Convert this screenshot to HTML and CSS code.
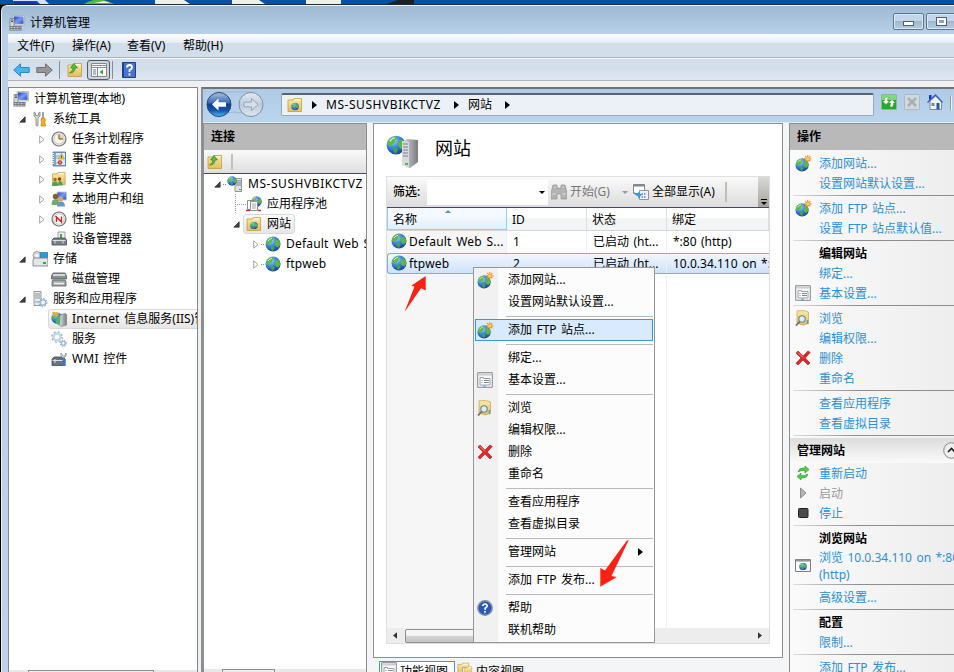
FILE: index.html
```html
<!DOCTYPE html>
<html lang="zh-CN">
<head>
    <meta charset="UTF-8">
    <title>计算机管理</title>
    <link rel="stylesheet" href="styles.css">
</head>
<body>
<svg class="defs" width="0" height="0">
    <defs>
        <radialGradient id="gSea" cx="35%" cy="28%" r="75%"><stop offset="0" stop-color="#b9dcff"/><stop offset=".4" stop-color="#4a92ea"/><stop offset=".75" stop-color="#2360cc"/><stop offset="1" stop-color="#1c4593"/></radialGradient>
        <linearGradient id="gFolder" x1="0" y1="0" x2="0" y2="1"><stop offset="0" stop-color="#fbe9a9"/><stop offset="1" stop-color="#e5bc5d"/></linearGradient>
        <linearGradient id="gMetal" x1="0" y1="0" x2="1" y2="0"><stop offset="0" stop-color="#dcdfe2"/><stop offset="1" stop-color="#777c80"/></linearGradient>
        <linearGradient id="gBack" x1="0" y1="0" x2="0" y2="1"><stop offset="0" stop-color="#a9c0e0"/><stop offset=".42" stop-color="#3f6db3"/><stop offset=".5" stop-color="#0d3f93"/><stop offset=".75" stop-color="#1458ae"/><stop offset="1" stop-color="#45c0fa"/></linearGradient>
        <linearGradient id="gFwd" x1="0" y1="0" x2="0" y2="1"><stop offset="0" stop-color="#e4ebf3"/><stop offset=".5" stop-color="#bccbdc"/><stop offset="1" stop-color="#dbe7f2"/></linearGradient>
        <linearGradient id="gScreen" x1="0" y1="0" x2="1" y2="1"><stop offset="0" stop-color="#1836c4"/><stop offset=".5" stop-color="#7b9df3"/><stop offset="1" stop-color="#2448c8"/></linearGradient>
    </defs>
    <symbol id="globe" viewBox="0 0 16 16">
        <circle cx="8" cy="8" r="7.500" fill="url(#gSea)"/>
        <path d="M1.500 5.500 4 2.200 7.500 1 8.700 2.700 7 4.500 7.300 6 5 7.500 4.500 9 2.500 8.500 1 8z" fill="#5dba45"/>
        <path d="M10.500 4 13 3.500 15 6.500 15.200 9 13 11.500 11 10.500 9.500 8z" fill="#5cb544"/>
        <path d="M5.500 10 8.500 10.200 9.500 12 7.800 15 6.200 13.500z" fill="#49a53a"/>
        <path d="M3 5 5 3 7 2.300" stroke="#d5f3c2" fill="none"/>
    </symbol>
    <symbol id="globe-new" viewBox="0 0 18 18">
        <use href="#globe" x="0" y="3" width="15" height="15"/>
        <path d="M13.500 0v8M9.500 4h8M10.700 1.200l5.600 5.600M16.300 1.200l-5.600 5.600" stroke="#f0952a" stroke-width="1.300"/>
        <circle cx="13.500" cy="4" r="1.700" fill="#ffd36a"/>
    </symbol>
    <symbol id="pc" viewBox="0 0 16 16">
        <path d="M4 .5h11.500v9.500H4z" fill="#dfe1e3" stroke="#a9a9a0" stroke-width=".7"/>
        <path d="M5 1.500h9.500v7.300H5z" fill="url(#gScreen)"/>
        <path d="M1 3.500h4v8H1z" fill="#d5d7d8" stroke="#6d7276" stroke-width=".7"/>
        <path d="M2 5h2M2 6.500h2" stroke="#555"/>
        <path d="M.5 11h12v4.500H.5z" fill="#6b7278"/>
        <path d="M1.500 12.300h10M1.500 14.300h10" stroke="#d8dbdd" stroke-dasharray="2 1"/>
    </symbol>
    <symbol id="tools" viewBox="0 0 16 16">
        <path d="M2 1v4l2 2v7.500q1 1 2 0V7l2-2V1L6.500 2v2.500h-3V2z" fill="#d9dbdd" stroke="#7c8084" stroke-width=".8"/>
        <path d="M11 1v6" stroke="#82878b" stroke-width="1.500"/>
        <path d="M9.800 7h2.700l1 2-.8 2 .8 4H9l.8-4-.8-2z" fill="#f4b31c" stroke="#b97a07" stroke-width=".7"/>
    </symbol>
    <symbol id="clock" viewBox="0 0 16 16">
        <circle cx="8" cy="8" r="7" fill="#ececec" stroke="#757575" stroke-width="1.200"/>
        <circle cx="8" cy="8" r="5" fill="#fdf5dd" stroke="#bbb" stroke-width=".7"/>
        <path d="M8 8V3.500A4.500 4.500 0 0 1 12.500 8z" fill="#f0d08e"/>
        <path d="M8 3.500V8h4" stroke="#555" fill="none"/>
    </symbol>
    <symbol id="book" viewBox="0 0 16 16">
        <path d="M2 1h12.500v14H2z" fill="#7ba9d2" stroke="#46719a" stroke-width=".8"/>
        <path d="M5 2h9v12H5z" fill="#dce8f2"/>
        <path d="M5 5h4M5 7h3M5 12h2" stroke="#7d9cb8" stroke-width=".8"/>
        <path d="M10.500 2.500l3 5.500h-6z" fill="#f7cf2a" stroke="#a8820a" stroke-width=".5"/>
        <path d="M10.500 4.500v2.500" stroke="#333" stroke-width=".8"/>
        <circle cx="9" cy="11.500" r="2.300" fill="#cf2f2c"/><path d="M8 10.500l2 2M10 10.500l-2 2" stroke="#fff" stroke-width=".6"/>
        <path d="M2 2v12" stroke="#f3f3f3" stroke-width="2" stroke-dasharray="1 1"/>
    </symbol>
    <symbol id="folder" viewBox="0 0 16 16">
        <path d="M1 3h5l1-1.500h7.500V14.500H1z" fill="url(#gFolder)" stroke="#c39b45" stroke-width=".8"/>
        <path d="M8 2.800h5.500" stroke="#fff"/>
    </symbol>
    <symbol id="share" viewBox="0 0 16 16">
        <use href="#folder" width="16" height="15"/>
        <circle cx="4" cy="8.500" r="1.700" fill="#a9662c"/><circle cx="8.500" cy="8" r="1.700" fill="#80451d"/>
        <path d="M1 15q0-4.500 3-4.500T7 15zM7 14.500q0-4.500 2-4.500t3 4.500z" fill="#4da15a"/>
    </symbol>
    <symbol id="users" viewBox="0 0 16 16">
        <path d="M6 1h9.500v8H6z" fill="url(#gScreen)" stroke="#c9c9bd"/>
        <circle cx="4.500" cy="5.500" r="2.700" fill="#8a5b2b"/><circle cx="9.500" cy="8" r="2.500" fill="#d7a468"/>
        <path d="M.5 14q0-6 4-6t4 6z" fill="#6fae6a"/><path d="M6 15.500q0-5 4-5t4 5z" fill="#6b95c9"/>
    </symbol>
    <symbol id="perf" viewBox="0 0 16 16">
        <circle cx="8" cy="8" r="7" fill="#f3f3f3" stroke="#707070" stroke-width="1.200"/>
        <circle cx="8" cy="8" r="5.200" fill="#fff" stroke="#aaa" stroke-width=".6"/>
        <path d="M5.500 11V6M4.500 5l6 6V5.500" stroke="#d8201d" stroke-width="1.400" fill="none"/>
    </symbol>
    <symbol id="device" viewBox="0 0 16 16">
        <path d="M7 1h7v7H7z" fill="#eef0f1" stroke="#888" stroke-width=".8"/><path d="M10 3v4" stroke="#47a447" stroke-width="2"/>
        <path d="M1 9l2-2h11l1.500 2v5H1z" fill="#75818c" stroke="#454d55" stroke-width=".8"/>
        <path d="M1.500 9.500h13M4 9.500v3M12 9.500v3" stroke="#dde1e4"/>
    </symbol>
    <symbol id="storage" viewBox="0 0 16 16">
        <circle cx="5" cy="4.500" r="4" fill="#d9dee2" stroke="#868c91" stroke-width=".8"/><circle cx="5" cy="4.500" r="1.200" fill="#fff"/>
        <path d="M8 1.500h8v5H8z" fill="#2c9bd8" stroke="#256c98" stroke-width=".6"/>
        <path d="M1 9l1-2h13l1 2v6H1z" fill="#e3e5e6" stroke="#73787c" stroke-width=".8"/>
        <path d="M11 12h3" stroke="#35ad35" stroke-width="2"/>
    </symbol>
    <symbol id="disk" viewBox="0 0 16 16">
        <path d="M2 2h12l1.500 3v3H.5V5z" fill="#898e91" stroke="#505457" stroke-width=".8"/>
        <path d="M2 3h12v2H2z" fill="#d5d8da"/><path d="M11 6h3" stroke="#56c24a" stroke-width="1.500"/>
        <path d="M2 9h12l1 2v4H1v-4z" fill="#a6a9ab" stroke="#54585a" stroke-width=".8"/><path d="M3 12.500h10" stroke="#eee" stroke-width="1.500"/>
    </symbol>
    <symbol id="gear" viewBox="0 0 16 16">
        <circle cx="6" cy="6" r="3.500" fill="none" stroke="#c2d8ea" stroke-width="2.500"/>
        <circle cx="6" cy="6" r="5.200" fill="none" stroke="#9ab6cf" stroke-width="1.400" stroke-dasharray="2 2.100"/>
        <circle cx="12.300" cy="12.300" r="1.900" fill="none" stroke="#9dbad4" stroke-width="1.400"/>
        <circle cx="12.300" cy="12.300" r="3" fill="none" stroke="#7798b6" stroke-dasharray="1.200 1.200"/>
    </symbol>
    <symbol id="svcapp" viewBox="0 0 16 16">
        <path d="M2 .5h7v14H2z" fill="#e7eaec" stroke="#7b8083" stroke-width=".8"/>
        <path d="M3 3h5M3 5h5M3 7h5M3 11h4" stroke="#8e979d"/>
        <circle cx="11" cy="11.500" r="2.700" fill="#fff" stroke="#9dbad4" stroke-width="1.600"/>
        <circle cx="11" cy="11.500" r="4" fill="none" stroke="#7e9fbf" stroke-dasharray="1.500 1.600"/>
    </symbol>
    <symbol id="iis" viewBox="0 0 16 16">
        <use href="#globe" width="12" height="12" y="1"/>
        <path d="M1 .5l7 1.500-2 3-3 .5z" fill="#e9ae28"/>
        <path d="M9 4l5-1.500 1.500 1V14L10 15.500 8.500 14z" fill="url(#gMetal)" stroke="#71767a" stroke-width=".6"/>
        <path d="M5 12l1-7 2.500 2v8z" fill="#4bb862"/>
    </symbol>
    <symbol id="wmi" viewBox="0 0 16 16">
        <path d="M1 8l2-2h9l2 2v6.500H1z" fill="#69747e" stroke="#3f474e" stroke-width=".8"/><path d="M1.500 9.500h12M4 8v4" stroke="#dbe0e3"/>
        <path d="M10 2l2 3h2l1-3q1 3-2 5-4-1-3-5z" fill="#e8eaeb" stroke="#868b8f" stroke-width=".8"/>
        <path d="M13 8v7" stroke="#3777c4" stroke-width="3"/>
    </symbol>
    <symbol id="server" viewBox="0 0 16 16">
        <path d="M8 2.500h6.500v13H8z" fill="#dfe3e5" stroke="#787e82" stroke-width=".8"/><path d="M9 5h5M9 7h5M9 9h5" stroke="#788086"/><path d="M12 13.500h2" stroke="#3fae3f"/>
        <use href="#globe" width="10" height="10"/>
    </symbol>
    <symbol id="pool" viewBox="0 0 16 16">
        <use href="#globe" width="11" height="11" x="5"/>
        <path d="M1.500 4.500h7v9h-7z" fill="#fff" stroke="#8e8e8e"/><path d="M4.500 5.500h7v9h-7z" fill="#fff" stroke="#8e8e8e"/>
        <path d="M6 8h4M6 10h4M6 12h4" stroke="#9aa"/><path d="M0 14.500h4M12 14.500h3" stroke="#cc2e2e" stroke-width="1.500"/>
    </symbol>
    <symbol id="sites" viewBox="0 0 16 16">
        <use href="#folder" width="16" height="16"/><use href="#globe" x="4" y="5.500" width="8" height="8"/>
    </symbol>
    <symbol id="folder-up" viewBox="0 0 16 16">
        <use href="#folder" width="16" height="16"/>
        <path d="M2.500 11Q8 11 8 6h2.500L7 1.500 3.500 6H6q0 3-3.500 5z" fill="#52c43c" stroke="#2a8420" stroke-width=".7"/>
    </symbol>
    <symbol id="settings" viewBox="0 0 16 16">
        <path d="M.7.700h14.600v14.600H.7z" fill="#f7f9fa" stroke="#85898c"/><path d="M1 2.500h14" stroke="#c9cdd0" stroke-width="2"/>
        <path d="M3 5.500h3.500v1H13v6.500H3z" fill="#fff" stroke="#9aa0a4"/><path d="M4.500 8.500h1M7 8.500h5M4.500 10.500h1M7 10.500h5" stroke="#7e8c98"/>
        <path d="M6 14.200h3" stroke="#27b3e8"/>
    </symbol>
    <symbol id="browse" viewBox="0 0 16 16">
        <path d="M2 .7h7L13.500 2v11.500L8 15 2 13z" fill="url(#gFolder)" stroke="#c7a04c" stroke-width=".7"/><path d="M12.500 10v4" stroke="#55a0d8" stroke-width="1.500"/>
        <circle cx="7" cy="9" r="3.200" fill="#d8effb" stroke="#72818c" stroke-width="1.100"/><path d="M4.700 11.500L1 15.500" stroke="#676d72" stroke-width="1.800"/>
    </symbol>
    <symbol id="delete" viewBox="0 0 16 16">
        <path d="M1 3l2-2 5 5 5-5 2.200 1.500L10.200 8l4.800 5-2 2-5-5-5 5-2-1.800L6 8z" fill="#df2a2a" stroke="#a91414" stroke-width=".6"/>
        <path d="M3 2.500l5 5" stroke="#ff8c83"/>
    </symbol>
    <symbol id="help" viewBox="0 0 16 16">
        <circle cx="8" cy="8" r="7.200" fill="#2a57b8" stroke="#8690a0" stroke-width="1.500"/>
        <path d="M5.800 6Q6 4 8 4t2.200 1.900Q10 7.200 8.300 8L8 9.800M8 11v1.700" stroke="#fff" stroke-width="1.700" fill="none"/>
    </symbol>
    <symbol id="arrow-l" viewBox="0 0 17 14"><path d="M.7 7L7.500.8v3.700h8.700v5H7.500v3.700z"/></symbol>
    <symbol id="tri" viewBox="0 0 5 8"><path d="M0 0l5 4-5 4z"/></symbol>
    <symbol id="open" viewBox="0 0 7 7"><path d="M6.200.8v5.400H.8z" fill="#444" stroke="#111" stroke-width=".6"/></symbol>
    <symbol id="closed" viewBox="0 0 6 9"><path d="M.7.800L5 4.500.7 8.200z" fill="#fff" stroke="#a3a3a3"/></symbol>
</svg>

<div class="desktop">
    <svg width="954" height="4">
        <path d="M155 0h29l6 4h-35zM232 0h27l6 4h-33zM306 0h35v4h-35z" fill="#efefec"/><path d="M185 0h46v4h-40zM260 0h45v4h-39z" fill="#0b50a3"/>
        <path d="M13 0h32l4 4h-9l-3-3H13z" fill="#d5e1fa"/><path d="M14 2h20l3 2H14z" fill="#1a2fc0"/><path d="M84 4q14-9 30 0z" fill="#56b934"/><path d="M94 3l10-2 6 2z" fill="#e9f7e4"/>
        <path d="M387 4q18-8 27-4v4z" fill="#1c2025"/>
    </svg>
</div>
<div class="window">
    <div class="titlebar">
        <svg class="ico"><use href="#pc"/></svg>
        <span class="title">计算机管理</span>
        <div class="winbtn"><i class="min"></i></div>
        <div class="winbtn"><i class="max"></i></div>
    </div>
    <div class="menubar"><span>文件(F)</span><span>操作(A)</span><span>查看(V)</span><span>帮助(H)</span></div>
    <div class="toolbar">
        <svg width="17" height="14" fill="#45b4ee" stroke="#2e86c6"><use href="#arrow-l"/></svg>
        <svg class="flip" width="17" height="14" fill="#969696" stroke="#707070"><use href="#arrow-l"/></svg>
        <i class="tsep"></i>
        <svg class="ico up"><use href="#folder-up"/></svg>
        <div class="pressed"><svg width="16" height="14"><path d="M.5.5h15v13H.5z" fill="#f8f8f8" stroke="#888"/><path d="M1 2.500h14M1 4.500h14" stroke="#8b939a"/><path d="M2 7h3M2 9h3M2 11h3" stroke="#4f88b8"/><path d="M6.500 5v8" stroke="#888"/><path d="M12 6.500v5L8.500 9z" fill="#3caa2c"/></svg></div>
        <i class="tsep"></i>
        <svg class="qhelp" width="14" height="16"><path d="M.5.500h13v15H.5z" fill="#4a73cf" stroke="#1f3c8f"/><path d="M1.500 1v14" stroke="#1e429b"/><path d="M5 5.500Q5 3 7.500 3T10 5.500Q10 7 7.500 8v2M7.500 11.500v2" stroke="#fff" stroke-width="1.800" fill="none"/></svg>
    </div>
    <div class="content">
        <div class="tree console">
            <div class="row root"><span class="node"><svg class="ico"><use href="#pc"/></svg>计算机管理(本地)</span></div>
            <div class="row l1"><svg class="tw"><use href="#open" width="7" height="7" x="1" y="1"/></svg><span class="node"><svg class="ico"><use href="#tools"/></svg>系统工具</span></div>
            <div class="row l2"><svg class="tw"><use href="#closed" width="6" height="9" x="1"/></svg><span class="node"><svg class="ico"><use href="#clock"/></svg>任务计划程序</span></div>
            <div class="row l2"><svg class="tw"><use href="#closed" width="6" height="9" x="1"/></svg><span class="node"><svg class="ico"><use href="#book"/></svg>事件查看器</span></div>
            <div class="row l2"><svg class="tw"><use href="#closed" width="6" height="9" x="1"/></svg><span class="node"><svg class="ico"><use href="#share"/></svg>共享文件夹</span></div>
            <div class="row l2"><svg class="tw"><use href="#closed" width="6" height="9" x="1"/></svg><span class="node"><svg class="ico"><use href="#users"/></svg>本地用户和组</span></div>
            <div class="row l2"><svg class="tw"><use href="#closed" width="6" height="9" x="1"/></svg><span class="node"><svg class="ico"><use href="#perf"/></svg>性能</span></div>
            <div class="row l2"><svg class="tw"></svg><span class="node"><svg class="ico"><use href="#device"/></svg>设备管理器</span></div>
            <div class="row l1"><svg class="tw"><use href="#open" width="7" height="7" x="1" y="1"/></svg><span class="node"><svg class="ico"><use href="#storage"/></svg>存储</span></div>
            <div class="row l2"><svg class="tw"></svg><span class="node"><svg class="ico"><use href="#disk"/></svg>磁盘管理</span></div>
            <div class="row l1"><svg class="tw"><use href="#open" width="7" height="7" x="1" y="1"/></svg><span class="node"><svg class="ico"><use href="#svcapp"/></svg>服务和应用程序</span></div>
            <div class="row l2"><svg class="tw"></svg><span class="node selected wide"><svg class="ico"><use href="#iis"/></svg><span class="lat">Internet </span>信息服务(IIS)管</span></div>
            <div class="row l2"><svg class="tw"></svg><span class="node"><svg class="ico"><use href="#gear"/></svg>服务</span></div>
            <div class="row l2"><svg class="tw"></svg><span class="node"><svg class="ico"><use href="#wmi"/></svg><span class="lat">WMI </span>控件</span></div>
            <div class="hscroll"><i></i></div>
        </div>

        <div class="iis">
            <div class="navbar">
                <svg class="navbtns" width="66" height="32">
                    <path d="M12 3h38M12 28q19-10 38 0" stroke="#9fb7cf" fill="none"/>
                    <circle cx="16" cy="15.500" r="12" fill="url(#gBack)" stroke="#2b466f"/>
                    <path d="M9 15.500l6.500-6v3.700h7.500v4.600h-7.500v3.700z" fill="#fff"/>
                    <circle cx="48" cy="15.500" r="12" fill="url(#gFwd)" stroke="#7f90a3"/>
                    <path d="M55 15.500l-6.500-6v3.700H41v4.600h7.500v3.700z" fill="#d4dfea" stroke="#98a9ba"/>
                </svg>
                <div class="address">
                    <svg class="ico"><use href="#sites"/></svg>
                    <svg class="crumb"><use href="#tri"/></svg>
                    <span class="host">MS-SUSHVBIKCTVZ</span>
                    <svg class="crumb"><use href="#tri"/></svg>
                    <span class="site">网站</span>
                    <svg class="crumb"><use href="#tri"/></svg>
                </div>
                <svg class="ico n1" viewBox="0 0 16 16"><rect x=".5" y=".5" width="15" height="15" rx="1" fill="#25ac2d" stroke="#8fb890"/><path d="M1 1h14v5H1z" fill="#7fd77f"/><path d="M7 3H5.500q-2 0-2 3v1H1.500L5 10.500 8.500 7h-2V5.500H7zM9 13h1.500q2 0 2-3V9h2L11 5.500 7.500 9h2v1.500H9z" fill="#fff" stroke="#2d8a2f" stroke-width=".4"/></svg>
                <svg class="ico n2" viewBox="0 0 16 16"><rect x=".5" y=".5" width="15" height="15" rx="1" fill="#d3d8dd" stroke="#b1b8be"/><path d="M4 4l8 8M12 4l-8 8" stroke="#a9afb5" stroke-width="2.500"/></svg>
                <svg class="ico n3" viewBox="0 0 16 16"><path d="M3 7v8.500h11.500V7L8.500 2z" fill="#eff2f7" stroke="#7f8ca5"/><path d="M.5 8.500L8.500 1l7 7.500" stroke="#3b60bd" fill="none" stroke-width="1.500"/><path d="M2 1h2.500v3L2 6z" fill="#1336c8"/><path d="M9.500 9h3v6.500h-3z" fill="#2c559c"/><path d="M4.500 9h3v3h-3z" fill="#81868f"/></svg>
                <i class="navsep"></i>
            </div>
            <div class="panes">
                <div class="connections">
                    <div class="phead">连接</div>
                    <div class="ptool"><svg class="ico"><use href="#folder-up"/></svg><i></i></div>
                    <div class="tree">
                        <div class="row c0"><svg class="tw"><use href="#open" width="7" height="7" y="1"/><path d="M9 4.500h4" stroke="#888" stroke-dasharray="1 1"/></svg><span class="node"><svg class="ico"><use href="#server"/></svg><span class="host">MS-SUSHVBIKCTVZ</span></span></div>
                        <div class="row c1 line"><svg class="tw"></svg><span class="node"><svg class="ico"><use href="#pool"/></svg>应用程序池</span></div>
                        <div class="row c1"><svg class="tw"><use href="#open" width="7" height="7" y="1"/></svg><span class="node selected"><svg class="ico"><use href="#sites"/></svg>网站</span></div>
                        <div class="row c2"><svg class="tw"><use href="#closed" width="6" height="9" x="1"/><path d="M9 4.500h4" stroke="#888" stroke-dasharray="1 1"/></svg><span class="node"><svg class="ico"><use href="#globe"/></svg><span class="lat">Default Web S</span></span></div>
                        <div class="row c2"><svg class="tw"><use href="#closed" width="6" height="9" x="1"/><path d="M9 4.500h4" stroke="#888" stroke-dasharray="1 1"/></svg><span class="node"><svg class="ico"><use href="#globe"/></svg><span class="lat">ftpweb</span></span></div>
                    </div>
                    <div class="hscroll"><i></i></div>
                </div>

                <div class="middle">
                    <div class="feature">
                        <div class="fhead">
                            <svg width="34" height="34" viewBox="0 0 34 34"><use href="#globe" width="20" height="20"/><path d="M16 7l5-3 11 1v22l-8 6-8-3z" fill="url(#gMetal)"/><path d="M16 6l7 1v25l-7-2z" fill="#d7dadc"/><path d="M17 9h5M17 12h5M17 15h5M17 18h5M17 21h5" stroke="#7a8084"/><path d="M19 29h3" stroke="#36c236" stroke-width="2"/></svg>
                            <h1>网站</h1>
                        </div>
                        <div class="list">
                            <div class="filter">
                                <span class="flabel">筛选:</span>
                                <div class="combo"><i class="down"></i></div>
                                <svg class="ico bino" viewBox="0 0 16 16"><path d="M2 1h4v3h4V1h4l2 8v6h-6v-5H6v5H0V9z" fill="#b3b3b3" stroke="#929292" stroke-width=".7"/><path d="M1.500 10h3M11.500 10h3M3 3h2M11 3h2" stroke="#e4e4e4"/></svg>
                                <span class="go">开始(G)</span>
                                <i class="down gray"></i>
                                <svg class="ico all" viewBox="0 0 16 16"><path d="M.5.5h11v9H.5z" fill="#fff" stroke="#80878e"/><path d="M.5 1.500h11" stroke="#80878e" stroke-width="2"/><path d="M6.500 6.500h9v9h-9z" fill="#eef3fa" stroke="#8b939b"/><path d="M8.500 10h5M8.500 13h5" stroke="#5b7fc4" stroke-width="1.500" stroke-dasharray="1.500 1"/><path d="M1 8q1 4 4 4v2.500l4-3.800L5 8v2Q3 10 1 8z" fill="#2aa0e5"/></svg>
                                <span class="showall">全部显示(A)</span>
                                <i class="fsep"></i>
                                <div class="more"><i></i><b></b></div>
                            </div>
                            <div class="grid head"><span class="sorted">名称</span><span>ID</span><span>状态</span><span>绑定</span></div>
                            <div class="grid body">
                                <span class="name"><svg class="ico"><use href="#globe"/></svg><em class="lat">Default Web S...</em></span><span>1</span><span>已启动 (ht...</span><span>*:80 (http)</span>
                            </div>
                            <div class="grid body active">
                                <span class="name"><svg class="ico"><use href="#globe"/></svg><em class="lat">ftpweb</em></span><span>2</span><span>已启动 (ht...</span><span>10.0.34.110 on *:</span>
                            </div>
                            <div class="grid body fill"><span class="name"></span><span></span><span></span><span></span></div>
                            <div class="lscroll"><svg class="crumb flip"><use href="#tri"/></svg><i></i><svg class="crumb"><use href="#tri"/></svg></div>
                        </div>
                    </div>
                    <div class="tabs">
                        <span class="tab on"><svg class="ico"><use href="#settings"/></svg>功能视图</span>
                        <span class="tab"><svg class="ico" viewBox="0 0 16 16"><use href="#folder" width="13" height="13"/><path d="M5.500 5.500h8v10h-8z" fill="#fff" stroke="#9aa"/><use href="#folder" x="6" y="4" width="10" height="9"/></svg>内容视图</span>
                    </div>
                </div>

                <div class="actions">
                    <div class="phead">操作</div>
                    <div class="alist first">
                        <a><svg class="ico big"><use href="#globe-new"/></svg>添加网站...</a>
                        <a>设置网站默认设置...</a>
                        <hr>
                        <a><svg class="ico big"><use href="#globe-new"/></svg>添加 FTP 站点...</a>
                        <a>设置 FTP 站点默认值...</a>
                        <hr>
                        <b>编辑网站</b>
                        <a>绑定...</a>
                        <a><svg class="ico"><use href="#settings"/></svg>基本设置...</a>
                        <hr>
                        <a><svg class="ico"><use href="#browse"/></svg>浏览</a>
                        <a>编辑权限...</a>
                        <a><svg class="ico"><use href="#delete"/></svg>删除</a>
                        <a>重命名</a>
                        <hr>
                        <a>查看应用程序</a>
                        <a>查看虚拟目录</a>
                        <hr>
                    </div>
                    <div class="ahead">管理网站<svg width="17" height="17"><circle cx="8.500" cy="8.500" r="7.800" fill="#eee" stroke="#888"/><path d="M5 10l3.500-3.500L12 10" stroke="#222" stroke-width="1.700" fill="none"/></svg></div>
                    <div class="alist">
                        <a><svg class="ico" viewBox="0 0 16 16"><path d="M3 7q1-4 5-4h2V1l4 3.500L10 8V5.500q-4-.5-7 1.500zM13 9q-1 4-5 4H6v2l-4-3.500L6 8v2.500q4 .5 7-1.500z" fill="#4fcb45" stroke="#2a972a" stroke-width=".6"/></svg>重新启动</a>
                        <a class="off"><svg class="ico" viewBox="0 0 16 16"><path d="M5.500 3v10L11 8z" fill="#b5b5b5" stroke="#8e8e8e"/></svg>启动</a>
                        <a><svg class="ico" viewBox="0 0 16 16"><rect x="3.500" y="3.500" width="9.500" height="9" rx="1" fill="#4b4b4b" stroke="#222"/></svg>停止</a>
                        <hr>
                        <b>浏览网站</b>
                        <a class="two"><svg class="ico" viewBox="0 0 16 16"><path d="M.5 2.500h15v12H.5z" fill="#fff" stroke="#7a7f84"/><path d="M1 3.500h14" stroke="#8a9197" stroke-width="2"/><use href="#globe" x="4" y="5.500" width="8" height="8"/></svg><span>浏览 10.0.34.110 on *:80<br>(http)</span></a>
                        <hr>
                        <a>高级设置...</a>
                        <hr>
                        <b>配置</b>
                        <a>限制...</a>
                        <hr>
                        <a>添加 FTP 发布...</a>
                    </div>
                </div>
            </div>
        </div>
    </div>
</div>

<div class="ctx">
    <div class="item"><svg class="ico big"><use href="#globe-new"/></svg>添加网站...</div>
    <div class="item">设置网站默认设置...</div>
    <hr>
    <div class="item hover"><svg class="ico big"><use href="#globe-new"/></svg>添加 FTP 站点...</div>
    <hr>
    <div class="item">绑定...</div>
    <div class="item"><svg class="ico"><use href="#settings"/></svg>基本设置...</div>
    <hr>
    <div class="item"><svg class="ico"><use href="#browse"/></svg>浏览</div>
    <div class="item">编辑权限...</div>
    <div class="item"><svg class="ico"><use href="#delete"/></svg>删除</div>
    <div class="item">重命名</div>
    <hr>
    <div class="item">查看应用程序</div>
    <div class="item">查看虚拟目录</div>
    <hr>
    <div class="item">管理网站<svg class="crumb sub"><use href="#tri"/></svg></div>
    <hr>
    <div class="item">添加 FTP 发布...</div>
    <hr>
    <div class="item"><svg class="ico"><use href="#help"/></svg>帮助</div>
    <div class="item">联机帮助</div>
</div>

<svg class="marks" width="954" height="672">
    <path d="M404.500 312L414.500 286.500 411.300 285.700 425.700 276V290.500L421 288.300z"/>
    <path d="M629 539.500L611.500 576 616.800 577 600.300 586.800V568L605 570.500 626.500 541z"/>
</svg>
</body>
</html>
```
FILE: styles.css
```css
* {
    box-sizing: border-box;
}
body {
    margin: 0;
    width: 954px;
    height: 672px;
    overflow: hidden;
    position: relative;
    background: #000;
    font: 12px/20px "Noto Sans", "Noto Sans CJK SC", sans-serif;
    word-spacing: 1.3px;
    color: #000;
    white-space: nowrap;
}
svg {
    display: block;
    flex: none;
}
i, em {
    font-style: normal;
    flex: none;
}
.defs {
    position: absolute;
}
.ico {
    width: 16px;
    height: 16px;
}
.flip {
    transform: scaleX(-1);
}
.crumb {
    width: 5px;
    height: 8px;
}
.lat {
    letter-spacing: 0.2px;
    white-space: pre;
}
.host {
    letter-spacing: 0.55px;
}

/* window frame */
.desktop {
    height: 5px;
    background: #0750a4;
    border-bottom: 1px solid #222c38;
}
.window {
    height: 667px;
    margin-left: 1px;
    padding-left: 6px;
    border-top: 1px solid #eef4fa;
    border-left: 1px solid #e8eff7;
    border-top-left-radius: 6px;
    background: linear-gradient(#9fb9d4, #b9d0e8 28px, #bfd4ec);
    display: flex;
    flex-direction: column;
}
.titlebar {
    flex: none;
    height: 28px;
    display: flex;
    align-items: center;
    padding: 5px 0 0 1px;
}
.title {
    margin: 0 auto 0 5px;
}
.winbtn {
    width: 31px;
    height: 17px;
    margin: -3px 0 0 2px;
    border: 1px solid #5c7590;
    border-radius: 2px;
    box-shadow: inset 0 0 0 1px #dce8f4;
    background: linear-gradient(#c3d5e8 48%, #9fb8d1 50%, #b5cce3);
    display: flex;
    align-items: center;
    justify-content: center;
}
.winbtn + .winbtn {
    margin-right: -3px;
}
.min {
    width: 11px;
    height: 5px;
    margin-top: 4px;
    border: 1px solid #555e68;
    background: #fff;
}
.max {
    width: 11px;
    height: 9px;
    border: 1px solid #555e68;
    background: #8ea4bb;
    box-shadow: inset 0 0 0 2px #fff;
}
.menubar {
    flex: none;
    height: 24px;
    line-height: 24px;
    padding-left: 9px;
    border-bottom: 1px solid #a8b4c3;
    background: linear-gradient(#fcfdfe, #e5ebf4 9px, #d3deeb 9px, #d3deeb);
}
.menubar span {
    display: inline-block;
    width: 55px;
}
.menubar span + span + span {
    width: 56px;
}
.toolbar {
    flex: none;
    height: 23px;
    border-top: 1px solid #f5f8fb;
    border-bottom: 1px solid #a8b4c3;
    background: linear-gradient(#d3deeb 40%, #dfe7f1);
    display: flex;
    align-items: center;
    padding-left: 5px;
}
.toolbar .flip {
    margin-left: 6px;
}
.tsep {
    width: 1px;
    height: 18px;
    background: #858c95;
    margin: 0 7px 0 6px;
}
.pressed {
    width: 23px;
    height: 20px;
    margin-left: 4px;
    border: 1px solid #515b68;
    border-radius: 3px;
    background: #cbd2dc;
    display: flex;
    align-items: center;
    justify-content: center;
}
.pressed + .tsep {
    margin: 0 9px 0 2px;
}
.content {
    flex: 1;
    min-height: 0;
    padding-top: 6px;
    background: #f0f0f0;
    display: flex;
}

/* trees */
.tree {
    background: #fff;
    overflow: hidden;
}
.console {
    width: 190px;
    border: 1px solid #828790;
    border-bottom: 0;
    padding-top: 1px;
    display: flex;
    flex-direction: column;
    margin-right: 3px;
    flex: none;
}
.row {
    flex: none;
    height: 20px;
    display: flex;
    align-items: center;
}
.tw {
    width: 14px;
    height: 9px;
}
.node {
    display: flex;
    align-items: center;
    height: 20px;
    line-height: 18px;
    padding: 0 3px;
    margin-left: -3px;
    border: 1px solid transparent;
    border-width: 1px 0;
}
.node .ico {
    margin-right: 5px;
}
.node.selected {
    border: 1px solid #d9d9d9;
    border-radius: 3px;
    padding: 0 3px 0 2px;
    background: linear-gradient(#fafafa, #e6e6e6);
}
.root { padding-left: 4px; }
.l1 { padding-left: 9px; }
.l2 { padding-left: 29px; }
.l2 .tw { width: 13px; }
.c0 { padding-left: 10px; }
.c1 { padding-left: 29px; }
.c2 { padding-left: 48px; }
.connections .tw { width: 13px; }
.line .tw {
    height: 20px;
    background: repeating-linear-gradient(90deg, #999 0 1px, #fff 1px 2px) 2px 10px / 11px 1px no-repeat, repeating-linear-gradient(#999 0 1px, #fff 1px 2px) 2px 0 / 1px 20px no-repeat;
}
.hscroll {
    flex: none;
    height: 2px;
    margin-top: auto;
    background: #e8e8e8;
    padding-left: 19px;
}
.hscroll i {
    display: block;
    width: 126px;
    height: 4px;
    border: 1px solid #8f8f8f;
    background: #eee;
}

/* iis manager */
.iis {
    flex: 1;
    min-width: 0;
    border: 2px solid #6e7379;
    border-width: 2px 0 0 2px;
    border-left-color: #8b8f94;
    display: flex;
    flex-direction: column;
    background: #f3f5f7;
    overflow: hidden;
}
.navbar {
    flex: none;
    height: 34px;
    background: linear-gradient(#afcbe7, #bcd5ec);
    border-bottom: 1px solid #dcebf8;
    display: flex;
}
.navbtns {
    margin-right: 12px;
}
.address {
    width: 593px;
    height: 23px;
    margin-top: 4px;
    border: 1px solid #9aa7b5;
    border-top: 2px solid #596573;
    border-radius: 2px;
    background: #ecf1f7;
    display: flex;
    align-items: center;
    line-height: 18px;
    padding: 0 0 1px 5px;
}
.address .crumb {
    margin-left: 9px;
}
.address .host {
    width: 119px;
    margin-left: 9px;
}
.address .site {
    width: 28px;
    margin-left: 9px;
}
.navbar > .ico {
    margin: 5px 0 0 7px;
}
.navsep {
    width: 2px;
    height: 14px;
    margin: 7px 0 0 7px;
    background: #f3f3ee;
    border-left: 1px solid #999;
}
.panes {
    flex: 1;
    min-height: 0;
    display: flex;
}
.phead {
    flex: none;
    height: 26px;
    padding-left: 7px;
    line-height: 26px;
    font-weight: bold;
    background: #b9b9b9;
}
.connections {
    flex: none;
    width: 164px;
    border: 1px solid #8e8e8e;
    border-bottom: 0;
    background: #fff;
    display: flex;
    flex-direction: column;
    overflow: hidden;
}
.ptool {
    flex: none;
    height: 24px;
    border-bottom: 1px solid #4a4468;
    background: linear-gradient(#fafafa, #dedede);
    display: flex;
    align-items: center;
    padding-left: 3px;
}
.ptool i {
    width: 2px;
    height: 16px;
    margin-left: 8px;
    background: #c1c4b4;
}
.connections .hscroll {
    height: 3px;
    padding-left: 18px;
}
.connections .hscroll i {
    width: 53px;
}
.middle {
    flex: none;
    width: 410px;
    margin: 0 6px;
    display: flex;
    flex-direction: column;
}
.feature {
    height: 535px;
    flex: none;
    border: 1px solid #8e8e8e;
    background: #fff;
    padding: 0 12px;
}
.fhead {
    height: 52px;
    display: flex;
    padding-top: 11px;
}
h1 {
    margin: -1px 0 0 15px;
    font-size: 18px;
    font-weight: normal;
    line-height: 28px;
}
.list {
    width: 384px;
    height: 468px;
    border: 1px solid #dfdfdf;
    display: flex;
    flex-direction: column;
}
.filter {
    flex: none;
    height: 31px;
    border-bottom: 1px solid #4a4468;
    background: linear-gradient(#fafafa, #dcdcdc);
    display: flex;
    align-items: center;
    padding-left: 6px;
}
.flabel {
    width: 34px;
    font-weight: 500;
}
.combo {
    width: 121px;
    height: 25px;
    background: #fff;
    margin-right: 3px;
    display: flex;
    align-items: center;
    justify-content: flex-end;
    padding-right: 3px;
}
.down {
    border: 3px solid transparent;
    border-top-color: #000;
    border-bottom: 0;
}
.down.gray {
    border-top-color: #999;
    margin: 0 5px 0 11px;
}
.bino {
    margin-right: 3px;
}
.go {
    width: 41px;
    color: #777;
}
.showall {
    width: 70px;
    margin-left: 3px;
}
.fsep {
    width: 2px;
    height: 20px;
    margin-left: 3px;
    background: #bdc0ae;
}
.more {
    width: 11px;
    height: 30px;
    margin-left: auto;
    background: linear-gradient(#dadad6, #a3a399);
    display: flex;
    flex-direction: column;
    align-items: center;
    justify-content: flex-end;
    padding-bottom: 2px;
}
.more i {
    width: 6px;
    height: 1px;
    background: #000;
    margin-bottom: 2px;
}
.more b {
    border: 3px solid transparent;
    border-top-color: #000;
    border-bottom: 0;
}
.grid {
    flex: none;
    display: grid;
    grid-template-columns: 120px 80px 80px 102px;
    align-items: stretch;
}
.grid span {
    padding-left: 5px;
    overflow: hidden;
}
.head {
    height: 23px;
    line-height: 23px;
    border-bottom: 1px solid #d5d5d5;
    background: linear-gradient(#fff 45%, #f3f4f5 46%);
}
.head span {
    border-right: 1px solid #dfdfdf;
}
.head .sorted {
    position: relative;
    border: solid #96cdf0;
    border-width: 0 1px 1px;
    background: linear-gradient(#f5fafe 35%, #e1eefb);
}
.sorted::after {
    content: "";
    position: absolute;
    left: 57px;
    top: 2px;
    border: 3px solid transparent;
    border-top: 0;
    border-bottom-color: #5f8baf;
}
.body {
    height: 22px;
    line-height: 22px;
}
.body span {
    border-right: 1px solid #e9f1fb;
    padding-left: 6px;
}
.body span:last-child {
    border-right: 0;
}
.body .name {
    display: flex;
    align-items: center;
    padding-left: 4px;
    background: #f6f6f6;
}
.name .ico {
    margin: -2px 1px 0 0;
}
.name em {
    margin-left: 1px;
}
.active {
    height: 21px;
    line-height: 19px;
    border: 1px solid #84acdd;
    border-right: 0;
    border-radius: 3px 0 0 3px;
    grid-template-columns: 119px 80px 80px 102px;
    background: linear-gradient(#f0f6fe, #cfe2fb);
}
.active .name {
    padding-left: 3px;
    background: none;
}
.body.fill {
    flex: 1;
}
.lscroll {
    flex: none;
    height: 15px;
    background: #ededed;
    display: flex;
    align-items: center;
    padding: 0 7px 0 6px;
}
.lscroll .crumb {
    width: 4px;
    height: 7px;
    fill: #333;
}
.lscroll i {
    width: 200px;
    height: 14px;
    margin: 0 auto 0 8px;
    border: 1px solid #8f8f8f;
    border-radius: 2px;
    background: linear-gradient(#f5f5f5 45%, #d4d4d4 50%, #c4c4c4);
}
.tabs {
    display: flex;
    margin: 3px 0 0 6px;
}
.tab {
    display: flex;
    height: 21px;
    padding: 1px 2px 0;
    line-height: 20px;
}
.tab .ico {
    margin-right: 3px;
}
.tab.on {
    width: 76px;
    padding: 0 1px;
    border: 1px solid #3399f3;
    background: #fff;
}

/* actions pane */
.actions {
    flex: 1;
    min-width: 0;
    border: 1px solid #8e8e8e;
    border-width: 1px 0 0 1px;
    background: linear-gradient(90deg, #fafafa, #eee 160px);
    overflow: hidden;
}
.alist.first {
    padding-top: 3px;
}
.alist a, .alist b {
    display: flex;
    align-items: center;
    height: 20px;
    padding: 1px 0 0 29px;
    color: #2e8fd3;
}
.alist b {
    color: #000;
}
.alist a.off {
    color: #999;
}
.alist .ico {
    margin: -1px 8px 0 -24px;
}
.alist .big {
    width: 17px;
    height: 17px;
    margin-right: 7px;
}
.alist hr {
    height: 1px;
    margin: 2px 0 2px 3px;
    border: 0;
    background: linear-gradient(90deg, #ddd, #8d8d8d 40%);
}
.alist a.two {
    height: 34px;
    line-height: 17px;
}
.ahead {
    height: 25px;
    line-height: 25px;
    padding: 0 0 0 7px;
    font-weight: bold;
    background: linear-gradient(#dcdcdc, #fafafa);
    display: flex;
    align-items: center;
}
.ahead svg {
    margin-left: 98px;
}

/* context menu */
.ctx {
    position: absolute;
    left: 473px;
    top: 267px;
    width: 182px;
    height: 376px;
    padding: 1px;
    border: 1px solid #979797;
    background: linear-gradient(90deg, #f1f1f1 24px, #fcfcfc 24px);
}
.item {
    display: flex;
    align-items: center;
    height: 22px;
    padding-left: 33px;
}
.item .ico {
    margin: 0 15px 0 -31px;
}
.item .big {
    width: 17px;
    height: 17px;
    margin-right: 14px;
}
.item .sub {
    margin: 0 10px 0 auto;
}
.hover {
    border: 1px solid #3399e8;
    background: #d8eafd;
    padding-left: 32px;
}
.ctx hr {
    height: 1px;
    margin: 3px 0 2px 31px;
    border: 0;
    background: #bbb;
}

/* red pointers */
.marks {
    position: absolute;
    left: 0;
    top: 0;
    fill: #fb2213;
}
```
